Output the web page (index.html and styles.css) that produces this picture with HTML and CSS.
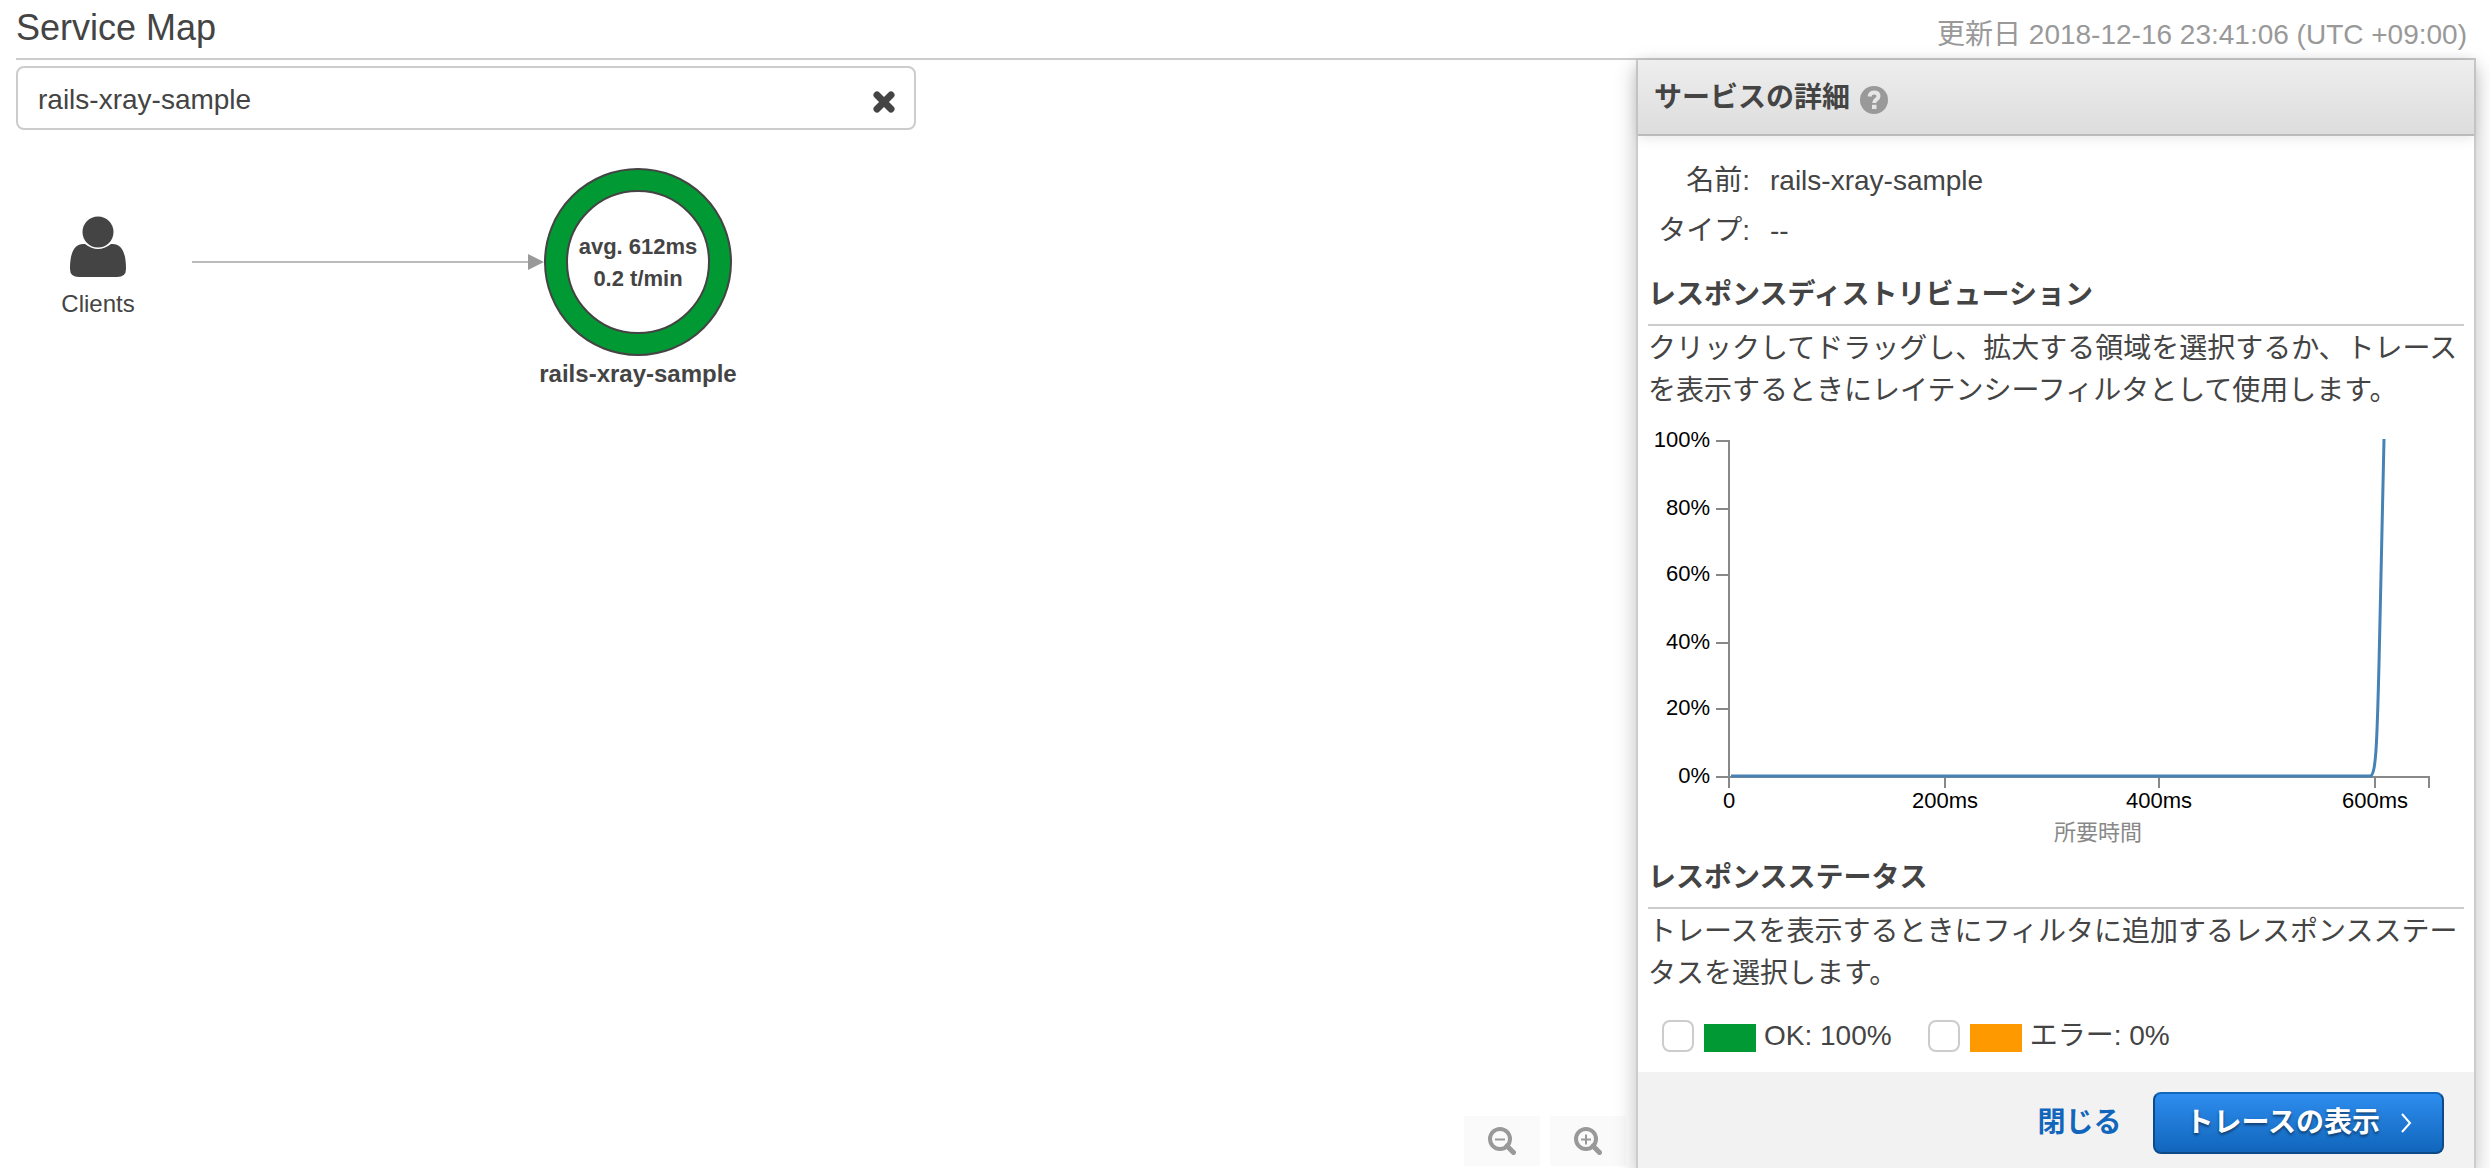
FILE: index.html
```html
<!DOCTYPE html>
<html lang="ja">
<head>
<meta charset="utf-8">
<title>Service Map</title>
<link rel="stylesheet" href="styles.css">
</head>
<body>
<header class="page-header">
  <h1 class="page-title">Service Map</h1>
  <p class="updated">更新日 2018-12-16 23:41:06 (UTC +09:00)</p>
</header>
<main class="workspace">
  <section class="map" aria-label="Service Map">
    <div class="search">
      <input class="search-input" type="text" value="rails-xray-sample" aria-label="Service">
      <button class="search-clear" type="button" aria-label="Clear">
        <svg width="22" height="22" viewBox="0 0 22 22"><path d="M4 4L18 18M18 4L4 18" stroke="#444" stroke-width="7" stroke-linecap="round"/></svg>
      </button>
    </div>
    <svg class="graph" width="800" height="300" viewBox="0 0 800 300">
      <circle cx="82" cy="102" r="15.500" fill="#444"/>
      <path d="M69 114Q82 124 95 114C105 113 110 121 110 139Q110 147 101 147H63Q54 147 54 139C54 121 59 113 69 114Z" fill="#444"/>
      <text class="client-label" x="82" y="182">Clients</text>
      <path d="M176 132H514" stroke="#bbb" stroke-width="2"/>
      <path d="M512 124L528 132L512 140Z" fill="#999"/>
      <circle cx="622" cy="132" r="82" fill="none" stroke="#444" stroke-width="24"/>
      <circle cx="622" cy="132" r="82" fill="none" stroke="#093" stroke-width="20"/>
      <text class="node-stat" x="622" y="124">avg. 612ms</text>
      <text class="node-stat" x="622" y="156">0.2 t/min</text>
      <text class="node-label" x="622" y="252">rails-xray-sample</text>
    </svg>
    <div class="zoom-controls">
      <button class="zoom-button" type="button" aria-label="Zoom out">
        <svg width="28" height="28" viewBox="0 0 28 28" fill="none" stroke="#999"><circle cx="12" cy="12" r="10" stroke-width="4"/><path d="M19 19L25.500 25.500" stroke-width="5" stroke-linecap="round"/><path d="M7 12.500H17" stroke-width="2"/></svg>
      </button>
      <button class="zoom-button" type="button" aria-label="Zoom in">
        <svg width="28" height="28" viewBox="0 0 28 28" fill="none" stroke="#999"><circle cx="12" cy="12" r="10" stroke-width="4"/><path d="M19 19L25.500 25.500" stroke-width="5" stroke-linecap="round"/><path d="M7 12.500H17M12 7.500V17.500" stroke-width="2"/></svg>
      </button>
    </div>
  </section>
  <aside class="details">
    <header class="details-header">
      <h2 class="details-title">サービスの詳細</h2>
      <button class="help" type="button" aria-label="Help">
        <svg width="28" height="28" viewBox="0 0 28 28"><circle cx="14" cy="14" r="14" fill="#999"/><path d="M9.500 10.500C10 7.500 12 6.500 14.200 6.500C17 6.500 18.500 8 18.500 10.200C18.500 13.500 14.200 13.300 14.200 17" fill="none" stroke="#e6e6e6" stroke-width="4"/><path d="M12 18.800H16.500V23H12Z" fill="#e6e6e6"/></svg>
      </button>
    </header>
    <div class="details-body">
      <dl class="facts">
        <dt>名前:</dt><dd>rails-xray-sample</dd>
        <dt>タイプ:</dt><dd>--</dd>
      </dl>
      <h3 class="section-title">レスポンスディストリビューション</h3>
      <p class="section-text">クリックしてドラッグし、拡大する領域を選択するか、トレースを表示するときにレイテンシーフィルタとして使用します。</p>
      <svg class="chart" viewBox="0 2 816 442">
        <g fill="none" stroke="#888" stroke-width="2">
          <path d="M68 31H81V367H68M68 99H81M68 165H81M68 233H81M68 299H81"/>
          <path d="M81 378V367H781V378M297 367V378M511 367V378M727 367V378"/>
        </g>
        <path d="M83 366H722C728 366 729 334 731 254C733 180 734 100 736 29" fill="none" stroke="steelblue" stroke-width="3"/>
        <g class="axis-y">
          <text x="62" y="37">100%</text>
          <text x="62" y="105">80%</text>
          <text x="62" y="171">60%</text>
          <text x="62" y="239">40%</text>
          <text x="62" y="305">20%</text>
          <text x="62" y="373">0%</text>
        </g>
        <g class="axis-x">
          <text x="81" y="398">0</text>
          <text x="297" y="398">200ms</text>
          <text x="511" y="398">400ms</text>
          <text x="727" y="398">600ms</text>
          <text class="axis-title" x="450" y="430">所要時間</text>
        </g>
      </svg>
      <h3 class="section-title">レスポンスステータス</h3>
      <p class="section-text">トレースを表示するときにフィルタに追加するレスポンスステータスを選択します。</p>
      <div class="statuses">
        <label class="status"><input class="tick" type="checkbox"><span class="swatch swatch-ok"></span>OK: 100%</label>
        <label class="status"><input class="tick" type="checkbox"><span class="swatch swatch-error"></span>エラー: 0%</label>
      </div>
    </div>
    <footer class="details-footer">
      <a class="close-link" href="#">閉じる</a>
      <button class="primary" type="button">トレースの表示
        <svg width="12" height="20" viewBox="0 0 12 20" fill="none" stroke="#fff" stroke-width="2"><path d="M2 1L10 10L2 19"/></svg>
      </button>
    </footer>
  </aside>
</main>
</body>
</html>
```
FILE: styles.css
```css
* {
  box-sizing: border-box;
}

body {
  margin: 0;
  min-height: 100vh;
  display: flex;
  flex-direction: column;
  background: #fff;
  color: #444;
  font-family: "Liberation Sans", "Noto Sans CJK JP", sans-serif;
  font-size: 28px;
  line-height: 42px;
}

h1, h2, h3, p, dl, dd {
  margin: 0;
}

button {
  padding: 0;
  border: 0;
  background: none;
  font: inherit;
  cursor: pointer;
}

svg {
  display: block;
}

.page-header {
  display: flex;
  justify-content: space-between;
  align-items: flex-start;
  height: 60px;
  margin: 0 14px 0 16px;
  border-bottom: 2px solid #ccc;
}

.page-title {
  font-size: 36px;
  font-weight: 400;
  line-height: 56px;
}

.updated {
  padding: 14px 9px 0 0;
  color: #999;
}

.workspace {
  flex: 1;
  display: flex;
  margin: 0 14px 0 16px;
}

.map {
  position: relative;
  flex: 1;
  min-width: 0;
  padding-top: 6px;
}

.search {
  display: flex;
  align-items: center;
  max-width: 900px;
  height: 64px;
  padding: 3px 19px 0 20px;
  border: 2px solid #ccc;
  border-radius: 8px;
}

.search-input {
  flex: 1;
  min-width: 0;
  padding: 0;
  border: 0;
  outline: 0;
  background: none;
  color: inherit;
  font: inherit;
}

.search-clear {
  padding-top: 4px;
}

.graph text {
  fill: #444;
  text-anchor: middle;
}

.client-label {
  font-size: 24px;
}

.node-stat {
  font-size: 22px;
  font-weight: 700;
}

.node-label {
  font-size: 24px;
  font-weight: 700;
}

.zoom-controls {
  position: absolute;
  right: 10px;
  bottom: 2px;
  display: flex;
  gap: 10px;
}

.zoom-button {
  display: flex;
  align-items: center;
  justify-content: center;
  width: 76px;
  height: 50px;
  background: #fafafa;
}

.details {
  position: relative;
  display: flex;
  flex-direction: column;
  flex: none;
  width: 840px;
  border: solid #ccc;
  border-width: 0 2px;
  background: #fff;
  box-shadow: 0 8px 20px rgba(0, 0, 0, 0.25);
}

.details-header {
  display: flex;
  align-items: center;
  gap: 10px;
  height: 76px;
  padding: 2px 0 0 16px;
  border-bottom: 2px solid #bbb;
  background: linear-gradient(#eee, #ddd);
  box-shadow: 0 2px 12px rgba(0, 0, 0, 0.1);
}

.details-title {
  font-size: 28px;
}

.help {
  padding-top: 4px;
}

.details-body {
  flex: 1;
  padding: 24px 10px 14px;
}

.facts {
  display: grid;
  grid-template-columns: 102px 1fr;
  gap: 8px 20px;
}

.facts dt {
  text-align: right;
}

.section-title {
  padding-bottom: 8px;
  border-bottom: 2px solid #ccc;
  font-size: 28px;
}

.facts + .section-title {
  margin-top: 22px;
}

.section-text {
  padding-top: 2px;
}

.chart {
  width: 100%;
  margin-bottom: 3px;
  font-size: 22px;
}

.axis-y {
  text-anchor: end;
}

.axis-x {
  text-anchor: middle;
}

.axis-title {
  fill: #888;
}

.statuses {
  display: flex;
  gap: 36px;
  padding: 20px 14px 0;
}

.status {
  display: flex;
  align-items: center;
}

.tick {
  appearance: none;
  width: 32px;
  height: 32px;
  margin: 0 10px 0 0;
  border: 2px solid #ccc;
  border-radius: 8px;
  background: #fff;
}

.swatch {
  width: 52px;
  height: 28px;
  margin: 4px 8px 0 0;
}

.swatch-ok {
  background: #093;
}

.swatch-error {
  background: #f90;
}

.details-footer {
  display: flex;
  align-items: center;
  justify-content: flex-end;
  gap: 32px;
  padding: 20px 30px 14px;
  background: #f2f2f2;
}

.close-link {
  color: #1166bb;
  font-weight: 700;
  text-decoration: none;
}

.primary {
  display: flex;
  align-items: center;
  gap: 20px;
  height: 62px;
  padding: 0 30px;
  border: 2px solid #0d4a87;
  border-top-color: #1166bb;
  border-radius: 8px;
  background: linear-gradient(#2e8def, #1166bb);
  color: #fff;
  font-weight: 700;
  text-shadow: 0 2px 3px rgba(0, 0, 0, 0.5);
}
```
